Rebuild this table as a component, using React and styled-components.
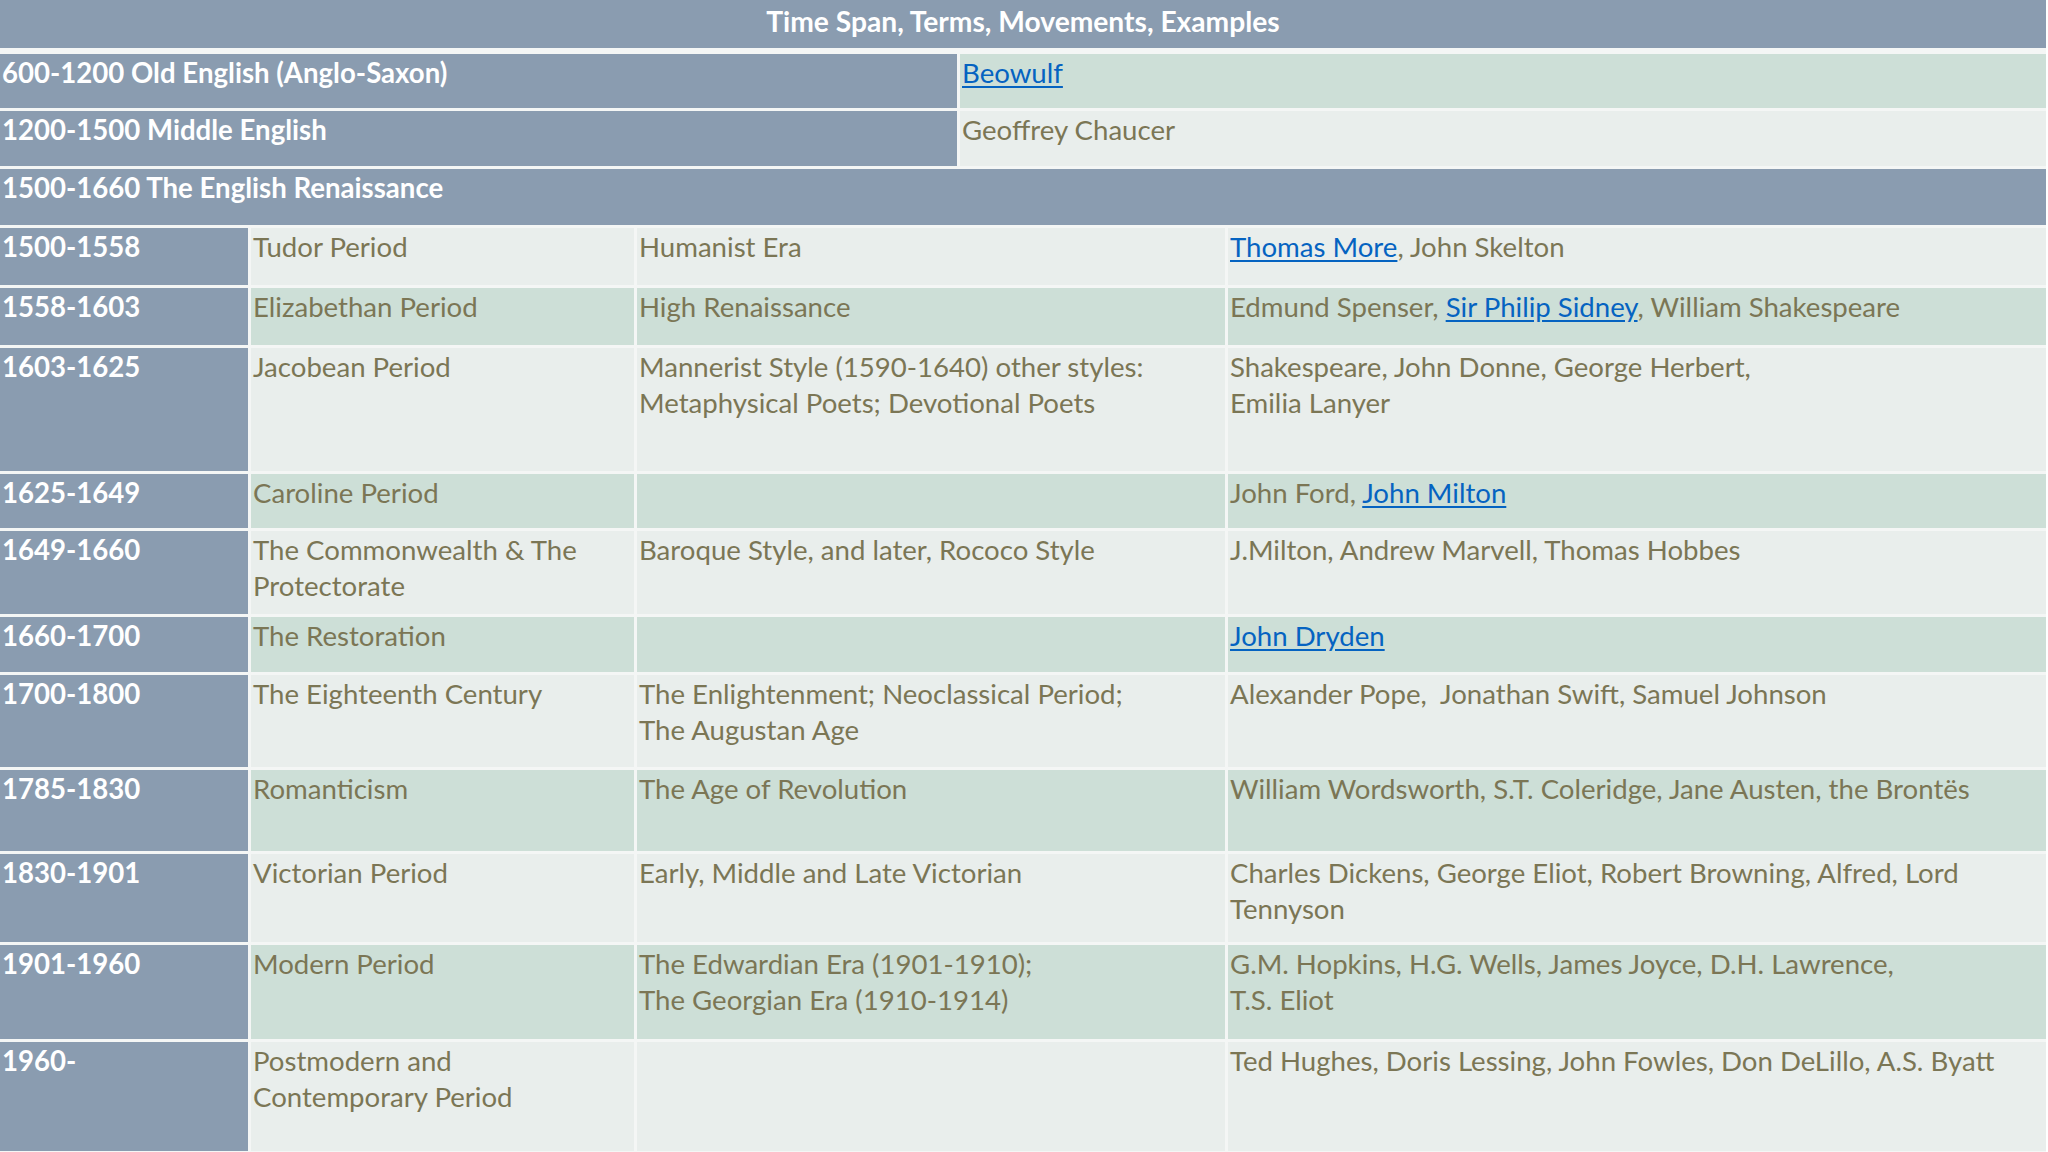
import React from 'react';
import styled, { createGlobalStyle } from 'styled-components';

const GlobalStyle = createGlobalStyle`
  html, body {
    margin: 0;
    padding: 0;
    background: #ffffff;
  }
  body {
    font-family: Lato, "Open Sans", "Liberation Sans", sans-serif;
  }
`;

const BLUE = '#8a9cb0';
const LIGHT = '#e9eeec';
const GREEN = '#cddfd7';
const TEXT = '#7b7655';
const LINK = '#0563c1';

const Table = styled.div`
  width: 2046px;
  height: 1152px;
  display: flex;
  flex-direction: column;
  gap: 3px;
  background: #f4f6f5;
  font-size: 27.6px;
  line-height: 36px;
`;

const Header = styled.div`
  height: 48px;
  margin-bottom: 3px;
  background: ${BLUE};
  color: #ffffff;
  font-size: 28.2px;
  font-weight: 700;
  text-align: center;
  line-height: 42px;
`;

const Row = styled.div`
  display: grid;
  grid-template-columns: ${({ $cols }) => $cols};
  column-gap: 3px;
  height: ${({ $h }) => $h}px;
  flex: none;
`;

const Period = styled.div`
  background: ${BLUE};
  color: #ffffff;
  font-weight: 700;
  padding: 1px 2px 0;
  white-space: nowrap;
  grid-column: ${({ $span }) => ($span ? '1 / -1' : 'auto')};
`;

const Cell = styled.div`
  background: ${({ $tone }) => ($tone === 'green' ? GREEN : LIGHT)};
  color: ${TEXT};
  padding: 1px 3px 0 2px;
  white-space: nowrap;
`;

const Link = styled.a`
  color: ${LINK};
  text-decoration: underline;
  text-underline-offset: 3px;
`;

const PERIOD_COLS = '248px 383px 588px 1fr';

const periods = [
  {
    span: '1500-1558', h: 57, tone: 'light',
    name: 'Tudor Period', era: 'Humanist Era',
    ex: [<Link key="a" href="#">Thomas More</Link>, ', John Skelton'],
  },
  {
    span: '1558-1603', h: 57, tone: 'green',
    name: 'Elizabethan Period', era: 'High Renaissance',
    ex: ['Edmund Spenser, ', <Link key="a" href="#">Sir Philip Sidney</Link>, ', William Shakespeare'],
  },
  {
    span: '1603-1625', h: 123, tone: 'light',
    name: 'Jacobean Period',
    era: ['Mannerist Style (1590-1640) other styles:', <br key="b" />, 'Metaphysical Poets; Devotional Poets'],
    ex: ['Shakespeare, John Donne, George Herbert,', <br key="b" />, 'Emilia Lanyer'],
  },
  {
    span: '1625-1649', h: 54, tone: 'green',
    name: 'Caroline Period', era: '',
    ex: ['John Ford, ', <Link key="a" href="#">John Milton</Link>],
  },
  {
    span: '1649-1660', h: 83, tone: 'light',
    name: ['The Commonwealth & The', <br key="b" />, 'Protectorate'],
    era: 'Baroque Style, and later, Rococo Style',
    ex: 'J.Milton, Andrew Marvell, Thomas Hobbes',
  },
  {
    span: '1660-1700', h: 55, tone: 'green',
    name: 'The Restoration', era: '',
    ex: [<Link key="a" href="#">John Dryden</Link>],
  },
  {
    span: '1700-1800', h: 92, tone: 'light',
    name: 'The Eighteenth Century',
    era: ['The Enlightenment; Neoclassical Period;', <br key="b" />, 'The Augustan Age'],
    ex: 'Alexander Pope,\u00a0 Jonathan Swift, Samuel Johnson',
  },
  {
    span: '1785-1830', h: 81, tone: 'green',
    name: 'Romanticism', era: 'The Age of Revolution',
    ex: 'William Wordsworth, S.T. Coleridge, Jane Austen, the Brontës',
  },
  {
    span: '1830-1901', h: 88, tone: 'light',
    name: 'Victorian Period', era: 'Early, Middle and Late Victorian',
    ex: ['Charles Dickens, George Eliot, Robert Browning, Alfred, Lord', <br key="b" />, 'Tennyson'],
  },
  {
    span: '1901-1960', h: 94, tone: 'green',
    name: 'Modern Period',
    era: ['The Edwardian Era (1901-1910);', <br key="b" />, 'The Georgian Era (1910-1914)'],
    ex: ['G.M. Hopkins, H.G. Wells, James Joyce, D.H. Lawrence,', <br key="b" />, 'T.S. Eliot'],
  },
  {
    span: '1960-', h: 109, tone: 'light',
    name: ['Postmodern and', <br key="b" />, 'Contemporary Period'],
    era: '',
    ex: 'Ted Hughes, Doris Lessing, John Fowles, Don DeLillo, A.S. Byatt',
  },
];

const App = () => (
  <>
    <GlobalStyle />
    <Table>
      <Header>Time Span, Terms, Movements, Examples</Header>
      <Row $cols="957px 1fr" $h={54}>
        <Period>600-1200 Old English (Anglo-Saxon)</Period>
        <Cell $tone="green">
          <Link href="#">Beowulf</Link>
        </Cell>
      </Row>
      <Row $cols="957px 1fr" $h={55}>
        <Period>1200-1500 Middle English</Period>
        <Cell $tone="light">Geoffrey Chaucer</Cell>
      </Row>
      <Row $cols="1fr" $h={56}>
        <Period $span>1500-1660 The English Renaissance</Period>
      </Row>
      {periods.map((p) => (
        <Row key={p.span} $cols={PERIOD_COLS} $h={p.h}>
          <Period>{p.span}</Period>
          <Cell $tone={p.tone}>{p.name}</Cell>
          <Cell $tone={p.tone}>{p.era}</Cell>
          <Cell $tone={p.tone}>{p.ex}</Cell>
        </Row>
      ))}
    </Table>
  </>
);

export default App;
